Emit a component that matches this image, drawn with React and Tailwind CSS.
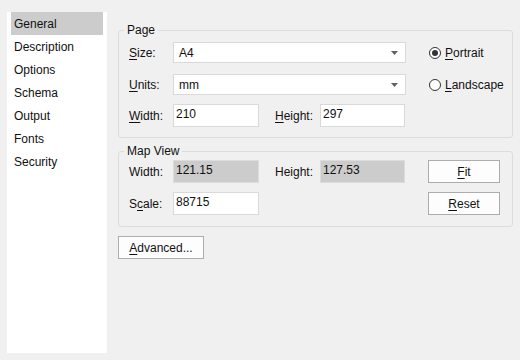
import React from 'react';

const font = { fontFamily: '"Segoe UI", "Liberation Sans", Arial, sans-serif' };

function U({ children }) {
  return <span className="underline underline-offset-[2px]">{children}</span>;
}

function Combo({ value }) {
  return (
    <div className="w-[233px] h-[21px] bg-white border border-[#d9d9d9] flex items-center pl-[5px] pr-[7px]">
      <span className="flex-1">{value}</span>
      <svg width="7" height="4" viewBox="0 0 7 4">
        <path d="M0 0 H7 L3.5 4 Z" fill="#606060" />
      </svg>
    </div>
  );
}

function Field({ value, readOnly, w = 'w-[86px]' }) {
  return (
    <div
      className={
        w +
        ' h-[23px] border pl-[2px] leading-[16px] pt-[1px] ' +
        (readOnly ? 'bg-[#cccccc] border-[#dcdcdc]' : 'bg-white border-[#d9d9d9]')
      }
    >
      {value}
    </div>
  );
}

function Radio({ checked, children }) {
  return (
    <div className="flex items-center gap-[4px] ml-[23px]">
      <div className="w-[12px] h-[12px] rounded-full border border-[#333333] bg-white flex items-center justify-center">
        {checked && <div className="w-[6px] h-[6px] rounded-full bg-[#333333]" />}
      </div>
      <span>{children}</span>
    </div>
  );
}

function Button({ children, className = '' }) {
  return (
    <div
      className={
        'h-[23px] border border-[#adadad] bg-[#fdfdfd] flex items-center justify-center ' + className
      }
    >
      {children}
    </div>
  );
}

const items = ['General', 'Description', 'Options', 'Schema', 'Output', 'Fonts', 'Security'];

export default function App() {
  return (
    <div
      className="w-[520px] h-[360px] bg-[#f0f0f0] flex text-[12px] text-[#111111] overflow-hidden"
      style={font}
    >
      {/* Sidebar */}
      <div className="ml-[7px] mt-[12px] w-[100px] h-[341px] bg-white">
        {items.map((it, i) => (
          <div
            key={it}
            className={
              'h-[23px] mx-[4px] pl-[3px] flex items-center ' + (i === 0 ? 'bg-[#cccccc]' : '')
            }
          >
            {it}
          </div>
        ))}
      </div>

      {/* Main */}
      <div className="ml-[11px] mt-[22px] w-[395px] flex flex-col">
        <fieldset className="border border-[#dcdcdc] rounded-[3px] p-0 m-0">
          <legend className="ml-[5px] px-[3px] leading-[16px]">Page</legend>
          <div className="pl-[10px] pt-[4px] pb-[10px] flex flex-col">
            <div className="flex items-center h-[21px]">
              <span className="w-[44px]">
                <U>S</U>ize:
              </span>
              <Combo value="A4" />
              <Radio checked>
                <U>P</U>ortrait
              </Radio>
            </div>
            <div className="flex items-center h-[21px] mt-[11px]">
              <span className="w-[44px]">
                <U>U</U>nits:
              </span>
              <Combo value="mm" />
              <Radio>
                <U>L</U>andscape
              </Radio>
            </div>
            <div className="flex items-center h-[23px] mt-[9px]">
              <span className="w-[44px]">
                <U>W</U>idth:
              </span>
              <Field value="210" />
              <span className="ml-[16px] w-[45px]">
                <U>H</U>eight:
              </span>
              <Field value="297" w="w-[85px]" />
            </div>
          </div>
        </fieldset>

        <fieldset className="border border-[#dcdcdc] rounded-[3px] p-0 mt-[5px]">
          <legend className="ml-[5px] px-[3px] leading-[16px]">Map View</legend>
          <div className="pl-[10px] pt-[1px] pb-[11px] flex flex-col">
            <div className="flex items-center h-[23px]">
              <span className="w-[44px]">Width:</span>
              <Field value="121.15" readOnly />
              <span className="ml-[16px] w-[45px]">Height:</span>
              <Field value="127.53" readOnly w="w-[85px]" />
              <Button className="ml-[23px] w-[72px]">
                <span>
                  <U>F</U>it
                </span>
              </Button>
            </div>
            <div className="flex items-center h-[23px] mt-[9px]">
              <span className="w-[44px]">
                S<U>c</U>ale:
              </span>
              <Field value="88715" />
              <div className="w-[146px]" />
              <Button className="ml-[23px] w-[72px]">
                <span>
                  <U>R</U>eset
                </span>
              </Button>
            </div>
          </div>
        </fieldset>

        <Button className="mt-[9px] w-[86px]">
          <span>
            <U>A</U>dvanced...
          </span>
        </Button>
      </div>
    </div>
  );
}
